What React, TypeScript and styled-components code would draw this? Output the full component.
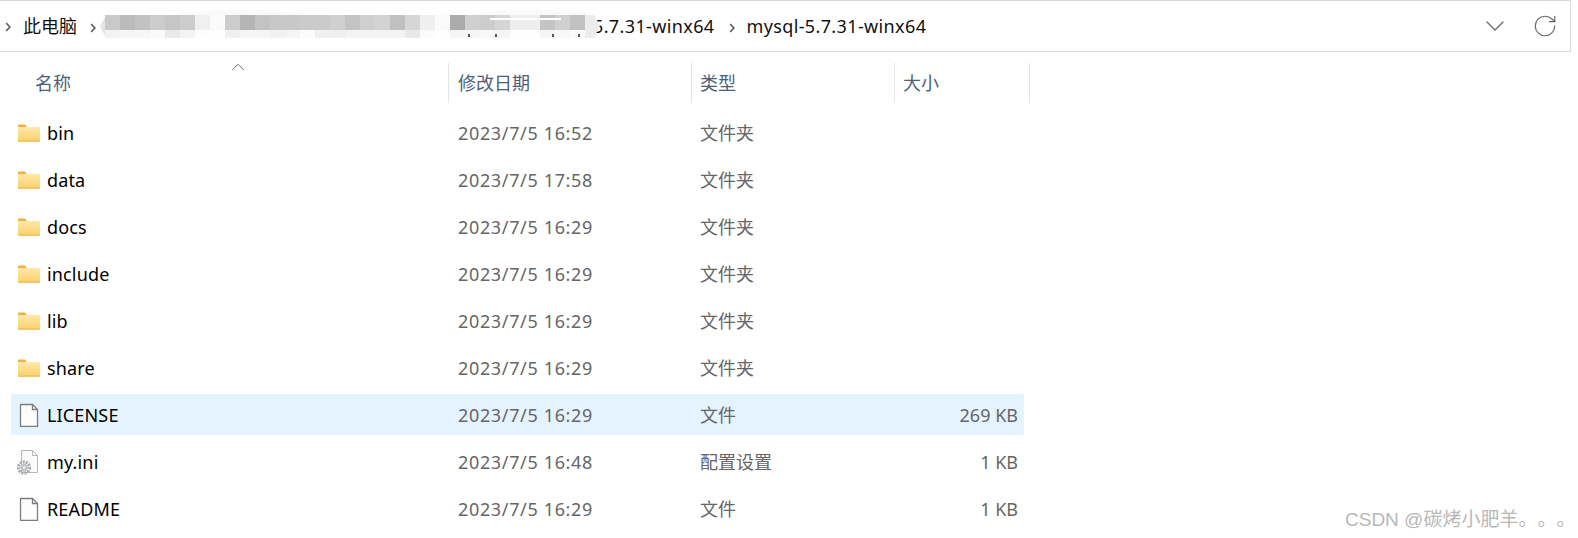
import React from 'react'
import styled, { createGlobalStyle } from 'styled-components'
import { ChevronDown, ChevronUp, RotateCw } from 'lucide-react'

const GlobalStyle = createGlobalStyle`
  html, body {
    margin: 0;
    background: #fff;
  }
  body {
    font-family: 'Noto Sans', 'Noto Sans CJK SC', sans-serif;
    font-size: 18px;
  }
`

const Page = styled.div`
  width: 1578px;
  height: 538px;
  overflow: hidden;
  position: relative;
`

const AddressBar = styled.div`
  width: 1571px;
  height: 52px;
  box-sizing: border-box;
  border-top: 1px solid #d9d9d9;
  border-bottom: 1px solid #d9d9d9;
  border-right: 1px solid #d9d9d9;
  display: flex;
  align-items: center;
  padding: 0 12px 0 5px;
  color: #111;
`

const Crumb = styled.span<{ $left: number }>`
  white-space: nowrap;
  margin-left: ${p => p.$left}px;
  letter-spacing: 0.37px;
`

const CjkCrumb = styled(Crumb)`
  letter-spacing: 0;
  margin-bottom: 2px;
`

const Sep = styled.svg`
  width: 7px;
  height: 10px;
  flex: none;
  margin-top: 2px;
`

const Mosaic = styled.div`
  position: relative;
  z-index: 1;
  margin: 1px 0 0 3px;
  padding-left: 5px;
  display: grid;
  grid-auto-flow: column;
  grid-template-rows: 15px 8px;
  grid-auto-columns: 15px;
`

const Cell = styled.div<{ $c: string }>`
  background: ${p => p.$c};
`

const Smudge = styled.div<{ $left: number; $width: number }>`
  position: absolute;
  left: ${p => p.$left}px;
  width: ${p => p.$width}px;
  top: -5px;
  height: 5px;
  background: #fafafa;
  border-radius: 50% 50% 0 0 / 100% 100% 0 0;
`

const Streak = styled.div`
  position: absolute;
  left: 390px;
  width: 71px;
  top: 3px;
  height: 2px;
  background: #fff;
`

const Speck = styled.div<{ $left: number }>`
  position: absolute;
  left: ${p => p.$left}px;
  top: 19px;
  width: 2px;
  height: 3px;
  background: #555;
`

const LeftCap = styled.div`
  position: absolute;
  left: 0;
  top: 2px;
  width: 5px;
  height: 19px;
  background: #e4e4e4;
  clip-path: polygon(100% 0, 100% 100%, 0 50%);
`

const Tail = styled.div`
  position: absolute;
  right: -15px;
  top: 0;
  width: 15px;
  height: 23px;
  background: #ececec;
  clip-path: polygon(0 0, 60% 0, 100% 45%, 60% 100%, 0 100%);
`

const Right = styled.div`
  margin-left: auto;
  display: flex;
  align-items: center;
  gap: 21px;
  color: #666;
`

const Header = styled.div`
  display: grid;
  grid-template-columns: 449px 243px 203px 135px;
  height: 40px;
  margin-top: 11px;
  align-items: center;
  color: #4c607a;
  position: relative;
`

const HeaderCell = styled.div<{ $pad: number }>`
  height: 40px;
  display: flex;
  align-items: center;
  box-sizing: border-box;
  padding: 0 0 2px ${p => p.$pad}px;
  border-right: 1px solid #e5e5e5;
`

const SortMark = styled.span`
  position: absolute;
  left: 227px;
  top: -7px;
  color: #666;
  line-height: 0;
`

const List = styled.div`
  margin-top: 9px;
  margin-left: 11px;
  width: 1013px;
  display: flex;
  flex-direction: column;
  gap: 6px;
`

const Row = styled.div<{ $active?: boolean }>`
  height: 41px;
  display: grid;
  grid-template-columns: 437px 243px 203px 1fr;
  align-items: center;
  border-radius: 2px;
  background: ${p => (p.$active ? '#e5f3ff' : 'transparent')};
`

const NameCell = styled.div`
  display: flex;
  align-items: center;
  padding-left: 6px;
  gap: 6px;
  color: #000;
  letter-spacing: 0.15px;
`

const DateCell = styled.div`
  color: #666;
  padding-left: 10px;
  letter-spacing: 0.65px;
`

const TypeCell = styled.div`
  color: #666;
  padding: 0 0 2px 9px;
`

const SizeCell = styled.div`
  color: #666;
  text-align: right;
  padding-right: 6px;
`

const Watermark = styled.div`
  position: absolute;
  left: 1345px;
  bottom: 7px;
  white-space: nowrap;
  font-family: 'Liberation Sans', 'Noto Sans CJK SC', sans-serif;
  font-size: 19px;
  color: #b8b8b8;
  text-spacing-trim: space-all;
`

const FolderIcon = () => (
  <svg width="24" height="18" viewBox="0 0 24 18">
    <path d="M1 3V1.5C1 1 1.4.5 2 .5h6l2 2.5z" fill="#f2b13c" />
    <rect x="1" y="3" width="22" height="14.5" fill="url(#folderFill)" />
    <rect x="1" y="16.6" width="22" height="1" fill="#edb342" />
    <defs>
      <linearGradient id="folderFill" x1="0" y1="0" x2="0" y2="1">
        <stop offset="0" stopColor="#ffe9a8" />
        <stop offset="1" stopColor="#fbd06c" />
      </linearGradient>
    </defs>
  </svg>
)

const FileIcon = () => (
  <svg width="24" height="24" viewBox="0 0 24 24">
    <path d="M3.5 1.5h12l5 5v17h-17z" fill="#fcfcfc" stroke="#7d7d7d" strokeWidth="1.3" />
    <path d="M15.5 1.5v5h5" fill="none" stroke="#7d7d7d" strokeWidth="1.3" />
  </svg>
)

const IniIcon = () => (
  <svg width="24" height="26" viewBox="0 0 24 26">
    <path d="M4.5 1.5h11l5 5v17h-16z" fill="#fbfbfb" stroke="#b5b5b5" />
    <path d="M15.5 1.5v5h5" fill="none" stroke="#b5b5b5" />
    <circle cx="7" cy="18.5" r="5.5" fill="none" stroke="#a9aeb2" strokeWidth="3.4" strokeDasharray="2 1" />
    <circle cx="7" cy="18.5" r="3.6" fill="#bfc4c8" />
    <circle cx="7" cy="18.5" r="1.4" fill="#eceff1" />
  </svg>
)

const CrumbSep = () => (
  <Sep viewBox="0 0 7 10">
    <path d="M1.2 1l3.6 4-3.6 4" fill="none" stroke="#666" strokeWidth="1.8" />
  </Sep>
)

type Item = { name: string; date: string; type: string; size?: string; icon: 'folder' | 'file' | 'ini'; active?: boolean }

const items: Item[] = [
  { name: 'bin', date: '2023/7/5 16:52', type: '文件夹', icon: 'folder' },
  { name: 'data', date: '2023/7/5 17:58', type: '文件夹', icon: 'folder' },
  { name: 'docs', date: '2023/7/5 16:29', type: '文件夹', icon: 'folder' },
  { name: 'include', date: '2023/7/5 16:29', type: '文件夹', icon: 'folder' },
  { name: 'lib', date: '2023/7/5 16:29', type: '文件夹', icon: 'folder' },
  { name: 'share', date: '2023/7/5 16:29', type: '文件夹', icon: 'folder' },
  { name: 'LICENSE', date: '2023/7/5 16:29', type: '文件', size: '269 KB', icon: 'file', active: true },
  { name: 'my.ini', date: '2023/7/5 16:48', type: '配置设置', size: '1 KB', icon: 'ini' },
  { name: 'README', date: '2023/7/5 16:29', type: '文件', size: '1 KB', icon: 'file' },
]

const icons = { folder: <FolderIcon />, file: <FileIcon />, ini: <IniIcon /> }

// the redacted stretch of the path: top row and bottom row of the blur blocks
const mosaicTop = ['c9', 'bb', 'c2', 'cc', 'c6', 'cc', 'f0', 'fb', 'cc', 'b5', 'c3', 'c8', 'c8', 'cb', 'cb', 'd0', 'c3', 'cf', 'd3', 'c0', 'd6', 'ef', 'fb', 'ab', 'cf', 'cc', 'd6', 'ee', 'ee', 'c4', 'd0', 'c2']
const mosaicBottom = ['f3', 'f5', 'f6', 'fa', 'e9', 'f3', 'fd', 'fe', 'f0', 'f5', 'f5', 'f1', 'f5', 'fc', 'f0', 'ef', 'f3', 'f3', 'f3', 'f3', 'e8', 'fb', 'fe', 'f5', 'f5', 'f8', 'f5', 'fe', 'fe', 'f5', 'f8', 'fb']

const gray = (v: string) => `#${v}${v}${v}`

export default function App() {
  return (
    <Page>
      <GlobalStyle />
      <AddressBar>
        <CrumbSep />
        <CjkCrumb $left={11}>此电脑</CjkCrumb>
        <Crumb $left={13}><CrumbSep /></Crumb>
        <Mosaic>
          <LeftCap />
          {mosaicTop.map((c, i) => (
            <React.Fragment key={i}>
              <Cell $c={gray(c)} />
              <Cell $c={gray(mosaicBottom[i])} />
            </React.Fragment>
          ))}
          <Tail />
          <Smudge $left={75} $width={130} />
          <Smudge $left={370} $width={120} />
          <Streak />
          {[368, 395, 452, 478].map(x => <Speck key={x} $left={x} />)}
        </Mosaic>
        <Crumb $left={8}>5.7.31-winx64</Crumb>
        <Crumb $left={15}><CrumbSep /></Crumb>
        <Crumb $left={10}>mysql-5.7.31-winx64</Crumb>
        <Right>
          <ChevronDown size={32} strokeWidth={0.9} />
          <RotateCw size={26} strokeWidth={1.1} />
        </Right>
      </AddressBar>
      <Header>
        <SortMark><ChevronUp size={22} strokeWidth={1} /></SortMark>
        <HeaderCell $pad={35}>名称</HeaderCell>
        <HeaderCell $pad={9}>修改日期</HeaderCell>
        <HeaderCell $pad={8}>类型</HeaderCell>
        <HeaderCell $pad={8}>大小</HeaderCell>
      </Header>
      <List>
        {items.map(it => (
          <Row key={it.name} $active={it.active}>
            <NameCell>{icons[it.icon]}{it.name}</NameCell>
            <DateCell>{it.date}</DateCell>
            <TypeCell>{it.type}</TypeCell>
            <SizeCell>{it.size}</SizeCell>
          </Row>
        ))}
      </List>
      <Watermark>CSDN @碳烤小肥羊。。。</Watermark>
    </Page>
  )
}
